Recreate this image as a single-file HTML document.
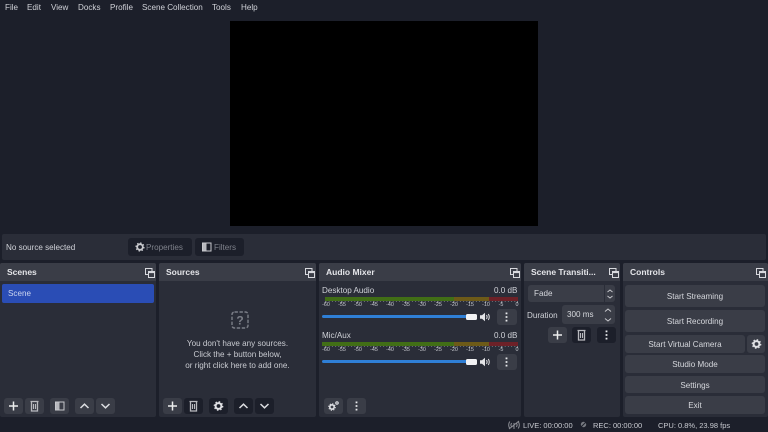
<!DOCTYPE html>
<html><head><meta charset="utf-8"><style>
html,body{margin:0;padding:0;width:768px;height:432px;overflow:hidden;background:#1c1f2a}
body{position:relative;font-family:"Liberation Sans",sans-serif;font-size:8.1px;color:#d0d2d8}
#w{position:absolute;left:0;top:0;width:768px;height:432px;filter:blur(.25px)}
div{position:absolute;box-sizing:border-box;white-space:nowrap}
.m{top:2px;line-height:11px;font-size:8.1px;color:#d0d2d8}
.p{background:#2a2d38;border-radius:2px;top:263px;height:154px}
.h{left:0;right:0;top:0;height:18px;background:#3a3d47;border-radius:2px 2px 0 0;font-weight:bold;font-size:8.5px;line-height:18px;padding-left:7px;color:#e4e5e9}
.b{background:#3a3d47;border-radius:3px;text-align:center;color:#d6d8dd}
.c{padding-top:1px}
.d{background:#1c1f2a;border-radius:3px}
.i{width:19px;height:16px;top:398px}
svg{position:absolute;left:0;top:0;overflow:visible}
.t{font-size:5.4px;color:#c8cad0;top:302px;line-height:7px;width:16px;text-align:center}
.s{font-size:7.5px;top:420px;line-height:11px;color:#c9cbd1}
</style></head><body><div id="w">
<svg width="0" height="0" style="position:absolute">
<defs>
<symbol id="fl" viewBox="0 0 10 10" overflow="visible"><path d="M3 6.500H.5V.5h6.500V3" fill="none" stroke="#d8d9de" stroke-width="1"/><rect x="3.500" y="3.500" width="6" height="6" fill="none" stroke="#d8d9de" stroke-width="1"/><rect x="3.500" y="3.500" width="6" height="1.600" fill="#d8d9de"/></symbol>
<symbol id="pl" viewBox="0 0 19 16"><path d="M9.500 3.500v9M5 8h9" stroke="#eceded" stroke-width="1.500" fill="none"/></symbol>
<symbol id="tr" viewBox="0 0 19 16"><path d="M5.500 3.500h8M6.500 3.500v9.500h6V3.500" stroke="#b8b9be" stroke-width="1.300" fill="none"/><path d="M8.500 6v5M10.500 6v5" stroke="#b8b9be" stroke-width="1.100"/></symbol>
<symbol id="up" viewBox="0 0 19 16"><path d="M5.500 10l4-3.800 4 3.800" stroke="#dcdde1" stroke-width="1.500" fill="none"/></symbol>
<symbol id="dn" viewBox="0 0 19 16"><path d="M5.500 6l4 3.800 4-3.800" stroke="#dcdde1" stroke-width="1.500" fill="none"/></symbol>
<symbol id="ge" viewBox="0 0 19 16"><circle cx="9.500" cy="8" r="2.900" fill="none" stroke="#e0e1e5" stroke-width="2"/><circle cx="9.500" cy="8" r="4.200" fill="none" stroke="#e0e1e5" stroke-width="1.300" stroke-dasharray="1.500 1.800"/></symbol>
<symbol id="do" viewBox="0 0 19 16"><path d="M9.500 3.500v1.800M9.500 7.100v1.800M9.500 10.700v1.800" stroke="#e8e9ec" stroke-width="1.800" fill="none"/></symbol>
<symbol id="fi" viewBox="0 0 19 16"><rect x="5.500" y="4" width="8.500" height="8" fill="none" stroke="#c8c9ce"/><rect x="6" y="4.500" width="3.500" height="7" fill="#b8b9be"/></symbol>
<symbol id="sp" viewBox="0 0 12 10"><path d="M1 3.200h2L6 .8v8.400L3 6.800H1z" fill="#e4e5e8"/><path d="M7.500 3c.7 1.200.7 2.800 0 4M9.300 2c1.200 1.900 1.200 4.100 0 6" stroke="#e4e5e8" fill="none" stroke-width="1"/></symbol>
</defs></svg>

<div class="m" style="left:5px">File</div>
<div class="m" style="left:27px">Edit</div>
<div class="m" style="left:51px">View</div>
<div class="m" style="left:78px">Docks</div>
<div class="m" style="left:110px">Profile</div>
<div class="m" style="left:142px">Scene Collection</div>
<div class="m" style="left:212px">Tools</div>
<div class="m" style="left:241px">Help</div>

<div style="left:230px;top:21px;width:308px;height:205px;background:#000"></div>

<div style="left:2px;top:234px;width:764px;height:26px;background:#2a2d38;border-radius:2px"></div>
<div style="left:6px;top:242px;line-height:11px">No source selected</div>
<div class="d" style="left:128px;top:238px;width:64px;height:18px;color:#7f828b;line-height:18px;padding:1px 0 0 18px">Properties
<svg width="10" height="10" style="left:7px;top:4px" viewBox="0 0 10 10"><circle cx="5" cy="5" r="2.800" fill="none" stroke="#c8c9ce" stroke-width="1.800"/><circle cx="5" cy="5" r="4" fill="none" stroke="#c8c9ce" stroke-width="1.200" stroke-dasharray="1.400 1.740"/></svg></div>
<div class="d" style="left:195px;top:238px;width:49px;height:18px;color:#7f828b;line-height:18px;padding:1px 0 0 19px">Filters
<svg width="19" height="16" style="left:2px;top:1px"><use href="#fi"/></svg></div>

<!-- Scenes -->
<div class="p" style="left:0;width:156px"><div class="h">Scenes</div>
<svg width="10" height="10" style="left:144.500px;top:4.500px"><use href="#fl"/></svg>
<div style="left:2px;top:21px;width:152px;height:19px;background:#2a4db5;border-radius:2px;line-height:19px;padding-left:6px;color:#cdd6f0">Scene</div></div>
<div class="b i" style="left:4px"><svg width="19" height="16"><use href="#pl"/></svg></div>
<div class="b i" style="left:25px"><svg width="19" height="16"><use href="#tr"/></svg></div>
<div class="b i" style="left:50px"><svg width="19" height="16"><use href="#fi"/></svg></div>
<div class="b i" style="left:75px"><svg width="19" height="16"><use href="#up"/></svg></div>
<div class="b i" style="left:96px"><svg width="19" height="16"><use href="#dn"/></svg></div>

<!-- Sources -->
<div class="p" style="left:159px;width:157px"><div class="h">Sources</div>
<svg width="10" height="10" style="left:145.500px;top:4.500px"><use href="#fl"/></svg></div>
<svg width="18" height="18" style="left:230.500px;top:311px" viewBox="0 0 18 18"><rect x="1" y="1" width="16" height="16" rx="2.500" fill="none" stroke="#7b7e87" stroke-width="1.400" stroke-dasharray="3.400 1.600"/><text x="9" y="13.500" font-family="Liberation Sans" font-weight="bold" font-size="12" fill="#7b7e87" text-anchor="middle">?</text></svg>
<div style="left:159px;width:157px;top:338px;text-align:center;line-height:11px;color:#c9cbd1;white-space:normal">You don't have any sources.<br>Click the + button below,<br>or right click here to add one.</div>
<div class="b i" style="left:163px"><svg width="19" height="16"><use href="#pl"/></svg></div>
<div class="d i" style="left:184px"><svg width="19" height="16"><use href="#tr"/></svg></div>
<div class="d i" style="left:209px"><svg width="19" height="16"><use href="#ge"/></svg></div>
<div class="d i" style="left:234px"><svg width="19" height="16"><use href="#up"/></svg></div>
<div class="d i" style="left:255px"><svg width="19" height="16"><use href="#dn"/></svg></div>

<!-- Audio Mixer -->
<div class="p" style="left:319px;width:202px"><div class="h">Audio Mixer</div>
<svg width="10" height="10" style="left:190.500px;top:4.500px"><use href="#fl"/></svg></div>

<div style="left:322px;top:285px;line-height:11px">Desktop Audio</div>
<div style="left:494px;top:285px;line-height:11px">0.0 dB</div>
<div style="left:325px;top:297px;width:129px;height:4px;background:#416e16"></div>
<div style="left:454px;top:297px;width:35px;height:4px;background:#6d5a18"></div>
<div style="left:489px;top:297px;width:29px;height:4px;background:#6d2128"></div>
<svg width="196" height="5" style="left:325px;top:301px"><path d="M.5 0v2M16.500 0v2M32.500 0v2M48.500 0v2M64.500 0v2M80.500 0v2M96.500 0v2M112.500 0v2M128.500 0v2M144.500 0v2M160.500 0v2M176.500 0v2M192.500 0v2" stroke="#a0a2a8" stroke-width=".8"/><path d="M.5 .5H193" stroke="#6c6f76" stroke-width="1" stroke-dasharray="1 2.200"/></svg>
<div class="t" style="left:318px">-60</div><div class="t" style="left:334px">-55</div><div class="t" style="left:350px">-50</div><div class="t" style="left:366px">-45</div><div class="t" style="left:382px">-40</div><div class="t" style="left:398px">-35</div><div class="t" style="left:414px">-30</div><div class="t" style="left:430px">-25</div><div class="t" style="left:446px">-20</div><div class="t" style="left:462px">-15</div><div class="t" style="left:478px">-10</div><div class="t" style="left:493px">-5</div><div class="t" style="left:509px">0</div>
<div style="left:322px;top:315px;width:145px;height:3px;background:#2f7fd6;border-radius:1.500px"></div>
<div style="left:466px;top:313.500px;width:11px;height:6px;background:#f2f2f4;border-radius:1.500px"></div>
<svg width="12" height="10" style="left:479px;top:312px"><use href="#sp"/></svg>
<div class="b" style="left:497px;top:309px;width:20px;height:16px"><svg width="19" height="16"><use href="#do"/></svg></div>

<div style="left:322px;top:330px;line-height:11px">Mic/Aux</div>
<div style="left:494px;top:330px;line-height:11px">0.0 dB</div>
<div style="left:322px;top:342px;width:132px;height:4px;background:#416e16"></div>
<div style="left:454px;top:342px;width:35px;height:4px;background:#6d5a18"></div>
<div style="left:489px;top:342px;width:29px;height:4px;background:#6d2128"></div>
<svg width="196" height="5" style="left:325px;top:346px"><path d="M.5 0v2M16.500 0v2M32.500 0v2M48.500 0v2M64.500 0v2M80.500 0v2M96.500 0v2M112.500 0v2M128.500 0v2M144.500 0v2M160.500 0v2M176.500 0v2M192.500 0v2" stroke="#a0a2a8" stroke-width=".8"/><path d="M.5 .5H193" stroke="#6c6f76" stroke-width="1" stroke-dasharray="1 2.200"/></svg>
<div class="t" style="top:347px;left:318px">-60</div><div class="t" style="top:347px;left:334px">-55</div><div class="t" style="top:347px;left:350px">-50</div><div class="t" style="top:347px;left:366px">-45</div><div class="t" style="top:347px;left:382px">-40</div><div class="t" style="top:347px;left:398px">-35</div><div class="t" style="top:347px;left:414px">-30</div><div class="t" style="top:347px;left:430px">-25</div><div class="t" style="top:347px;left:446px">-20</div><div class="t" style="top:347px;left:462px">-15</div><div class="t" style="top:347px;left:478px">-10</div><div class="t" style="top:347px;left:493px">-5</div><div class="t" style="top:347px;left:509px">0</div>
<div style="left:322px;top:360px;width:145px;height:3px;background:#2f7fd6;border-radius:1.500px"></div>
<div style="left:466px;top:358.500px;width:11px;height:6px;background:#f2f2f4;border-radius:1.500px"></div>
<svg width="12" height="10" style="left:479px;top:357px"><use href="#sp"/></svg>
<div class="b" style="left:497px;top:354px;width:20px;height:16px"><svg width="19" height="16"><use href="#do"/></svg></div>

<div class="b i" style="left:324px"><svg width="19" height="16"><circle cx="8" cy="9" r="2.200" fill="none" stroke="#e0e1e5" stroke-width="1.600"/><circle cx="8" cy="9" r="3.300" fill="none" stroke="#e0e1e5" stroke-dasharray="1.200 1.400"/><circle cx="13" cy="5" r="1.200" fill="none" stroke="#e0e1e5" stroke-width="1.200"/></svg></div>
<div class="b i" style="left:347px"><svg width="19" height="16"><use href="#do"/></svg></div>

<!-- Transitions -->
<div class="p" style="left:524px;width:96px"><div class="h">Scene Transiti...</div>
<svg width="10" height="10" style="left:85px;top:4.500px"><use href="#fl"/></svg></div>
<div class="b" style="left:528px;top:285px;width:87px;height:17px;text-align:left;line-height:17px;padding-left:6px">Fade</div>
<div style="left:604px;top:285px;width:1px;height:17px;background:#2a2d38"></div>
<svg width="8" height="12" style="left:606px;top:288px"><path d="M1.500 4L4 2l2.500 2M1.500 8L4 10l2.500-2" stroke="#c8c9ce" fill="none" stroke-width=".9"/></svg>
<div style="left:527px;top:310px;line-height:11px">Duration</div>
<div class="b" style="left:562px;top:305px;width:53px;height:19px;text-align:left;line-height:19px;padding-left:5px">300 ms</div>
<svg width="8" height="16" style="left:604px;top:307px"><path d="M1 4.500L4 2l3 2.500M1 11.500L4 14l3-2.500" stroke="#c8c9ce" fill="none" stroke-width="1"/></svg>
<div class="b" style="left:548px;top:327px;width:19px;height:16px"><svg width="19" height="16"><use href="#pl"/></svg></div>
<div class="d" style="left:572px;top:327px;width:19px;height:16px"><svg width="19" height="16"><use href="#tr"/></svg></div>
<div class="d" style="left:597px;top:327px;width:19px;height:16px"><svg width="19" height="16"><use href="#do"/></svg></div>

<!-- Controls -->
<div class="p" style="left:623px;width:145px"><div class="h">Controls</div>
<svg width="10" height="10" style="left:133px;top:4.500px"><use href="#fl"/></svg></div>
<div class="b c" style="left:625px;top:285px;width:140px;height:22px;line-height:22px">Start Streaming</div>
<div class="b c" style="left:625px;top:310px;width:140px;height:22px;line-height:22px">Start Recording</div>
<div class="b c" style="left:625px;top:335px;width:120px;height:18px;line-height:18px">Start Virtual Camera</div>
<div class="b" style="left:747px;top:335px;width:18px;height:18px"><svg width="19" height="16" style="top:1px"><use href="#ge"/></svg></div>
<div class="b c" style="left:625px;top:355px;width:140px;height:18px;line-height:18px">Studio Mode</div>
<div class="b c" style="left:625px;top:376px;width:140px;height:17px;line-height:17px">Settings</div>
<div class="b c" style="left:625px;top:396px;width:140px;height:18px;line-height:18px">Exit</div>

<!-- Status -->
<svg width="12" height="10" style="left:508px;top:420px" viewBox="0 0 12 10"><path d="M6 3v6M1.800 1.500c-1.500 2-1.500 5 0 7M10.200 1.500c1.500 2 1.500 5 0 7M3.600 3c-.8 1.200-.8 2.800 0 4M8.400 3c.8 1.200.8 2.800 0 4M1 9l10-8" stroke="#8d8f96" fill="none"/></svg>
<div class="s" style="left:523px">LIVE: 00:00:00</div>
<svg width="7" height="7" style="left:580px;top:421px" viewBox="0 0 7 7"><circle cx="3.500" cy="3.500" r="2.700" fill="#777a81"/><path d="M.5 6.500l6-6" stroke="#1c1f2a"/></svg>
<div class="s" style="left:593px">REC: 00:00:00</div>
<div class="s" style="left:658px">CPU: 0.8%, 23.98 fps</div>
</div></body></html>
